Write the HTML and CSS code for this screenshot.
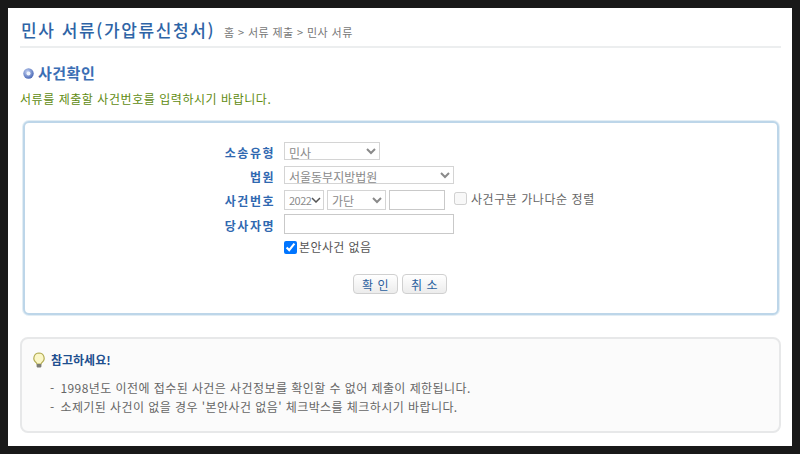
FILE: index.html
```html
<!DOCTYPE html>
<html lang="ko">
<head>
<meta charset="utf-8">
<title>민사 서류(가압류신청서)</title>
<link rel="stylesheet" href="styles.css">
</head>
<body>
<main class="page">
  <header class="head">
    <h1 class="title">민사 서류(가압류신청서)</h1>
    <span class="crumb">홈 &gt; 서류 제출 &gt; 민사 서류</span>
  </header>
  <h2 class="section">
    <svg class="bullet" width="11" height="11" viewBox="0 0 11 11" aria-hidden="true">
      <defs><radialGradient id="b" cx="0.4" cy="0.35" r="0.7"><stop offset="0" stop-color="#c4d2f2"/><stop offset="1" stop-color="#4463b4"/></radialGradient></defs>
      <circle cx="5.5" cy="5.5" r="5.2" fill="url(#b)"/>
      <circle cx="5.5" cy="5.5" r="2" fill="#eef3fc"/>
    </svg>
    사건확인
  </h2>
  <p class="desc">서류를 제출할 사건번호를 입력하시기 바랍니다.</p>
  <section class="box">
    <form class="form">
      <div class="row">
        <label class="label low">소송유형</label>
        <select class="ctl w96" disabled><option>민사</option></select>
      </div>
      <div class="row">
        <label class="label low">법원</label>
        <select class="ctl w170" disabled><option>서울동부지방법원</option></select>
      </div>
      <div class="row case-row">
        <label class="label">사건번호</label>
        <select class="ctl w40 num" disabled><option>2022</option></select>
        <select class="ctl w59" disabled><option>가단</option></select>
        <input class="ctl w56 field" type="text">
        <label class="sort"><input class="chk" type="checkbox" disabled>사건구분 가나다순 정렬</label>
      </div>
      <div class="row">
        <label class="label low">당사자명</label>
        <input class="ctl w170 field" type="text">
      </div>
      <div class="row none-row">
        <span class="label"></span>
        <label class="none"><input class="chk" type="checkbox" checked><span class="none-text">본안사건 없음</span></label>
      </div>
      <div class="btns">
        <button class="btn" type="button">확 인</button>
        <button class="btn" type="button">취 소</button>
      </div>
    </form>
  </section>
  <aside class="note">
    <h3 class="note-title">
      <svg width="14" height="16" viewBox="0 0 14 16" aria-hidden="true">
        <path d="M7 1a5.2 5.2 0 0 0-3 9.4c.6.5.8 1 .8 1.6h4.4c0-.6.2-1.100.8-1.600A5.200 5.200 0 0 0 7 1z" fill="#fbf7c8" stroke="#b3ad55" stroke-width="1.200"/>
        <rect x="4.600" y="12" width="4.800" height="3.400" rx="0.800" fill="#7c7c74"/>
      </svg>
      참고하세요!
    </h3>
    <ul class="list">
      <li>1998년도 이전에 접수된 사건은 사건정보를 확인할 수 없어 제출이 제한됩니다.</li>
      <li>소제기된 사건이 없을 경우 '본안사건 없음' 체크박스를 체크하시기 바랍니다.</li>
    </ul>
  </aside>
</main>
</body>
</html>
```
FILE: styles.css
```css
* { box-sizing: border-box; }
html, body { margin: 0; height: 100%; }
body {
  background: #191919;
  padding: 8px;
  font-family: "Noto Sans CJK KR", "Liberation Sans", sans-serif;
  overflow: hidden;
}
.page {
  background: #fff;
  height: 438px;
  padding: 9px 11px 0 12px;
}
.head {
  display: flex;
  align-items: center;
  height: 31px;
  border-bottom: 2px solid #eceeef;
  padding: 0 0 3px 1px;
}
.title {
  margin: 0;
  font-size: 17px;
  font-weight: 500;
  letter-spacing: 1.6px;
  color: #2e64a6;
  line-height: 24px;
}
.crumb {
  margin-left: 9px;
  font-size: 11px;
  color: #777;
  letter-spacing: 0.4px;
  padding-top: 4px;
}
.section {
  display: flex;
  align-items: center;
  gap: 4px;
  margin: 15px 0 0 3px;
  font-size: 15px;
  font-weight: 700;
  letter-spacing: 0.5px;
  line-height: 20px;
  color: #3a6eb4;
}
.desc {
  margin: 7px 0 0;
  font-size: 12px;
  letter-spacing: 0.55px;
  line-height: 18px;
  color: #5f8c12;
}
.box {
  margin: 13px 0 0 3px;
  width: 756px;
  height: 194px;
  border: 2px solid #bdd6e9;
  border-radius: 6px;
  box-shadow: 0 0 0 1px #e2edf4;
  background: #fff;
}
.form { padding: 16px 0 0 0; }
.row {
  display: flex;
  align-items: center;
  height: 24px;
}
.case-row { margin-top: 1px; }
.none-row { margin-top: -1px; }
.label {
  width: 250px;
  margin-right: 9px;
  text-align: right;
  font-size: 12px;
  font-weight: 700;
  letter-spacing: 1.5px;
  color: #2f68b0;
}
.low { padding-top: 2px; }
.ctl {
  height: 18px;
  border: 1px solid #d4d4d4;
  background: #fff;
  color: #8a8a8a;
  font-family: inherit;
  font-size: 12px;
  padding: 0;
  margin: 0;
  opacity: 1;
  border-radius: 0;
}
.field { height: 20px; border-color: #c9c9c9; }
.w96 { width: 96px; }
.w170 { width: 170px; }
.w40 { width: 40px; }
.w59 { width: 59px; margin-left: 3px; height: 20px; }
.w56 { width: 56px; margin-left: 3px; }
.num {
  height: 20px;
  font-size: 11px;
  letter-spacing: -0.5px;
  padding-left: 4px;
  appearance: none;
  background: #fff url("data:image/svg+xml,%3Csvg xmlns='http://www.w3.org/2000/svg' width='10' height='6'%3E%3Cpath d='M1 1l4 4 4-4' fill='none' stroke='%23555' stroke-width='1.500'/%3E%3C/svg%3E") no-repeat right 2px center;
}
.sort, .none {
  display: flex;
  align-items: center;
  font-size: 12px;
  color: #666;
}
.sort { margin-left: 9px; letter-spacing: 0.55px; padding-bottom: 3px; }
.sort .chk { margin-right: 4px; }
.none { color: #555; letter-spacing: 0.4px; }
.none-text { padding-bottom: 2px; }
.chk {
  width: 13px;
  height: 13px;
  margin: 0 3px 0 0;
}
.none .chk { margin-right: 2px; }
.btns {
  display: flex;
  justify-content: center;
  gap: 4px;
  margin-top: 15px;
  padding-right: 2px;
}
.btn {
  width: 45px;
  height: 20px;
  padding: 0;
  border: 1px solid #d0d0d0;
  border-radius: 4px;
  background: linear-gradient(#ffffff, #ececec);
  color: #2a5f9e;
  font-family: inherit;
  font-size: 12px;
  letter-spacing: 0.5px;
}
.note {
  margin: 22px 0 0;
  width: 761px;
  height: 96px;
  border: 2px solid #e7e8e9;
  border-radius: 8px;
  background: #fbfbfb;
  padding: 11px 0 0 10px;
}
.note-title {
  display: flex;
  align-items: center;
  gap: 5px;
  margin: 0;
  font-size: 12px;
  font-weight: 700;
  line-height: 20px;
  color: #1f4f8f;
}
.list {
  list-style: none;
  margin: 8px 0 0;
  padding: 0 0 0 18px;
  font-size: 12px;
  letter-spacing: 0.43px;
  line-height: 19px;
  color: #666;
}
.list li::before { content: "- "; margin-right: 2px; }
```
